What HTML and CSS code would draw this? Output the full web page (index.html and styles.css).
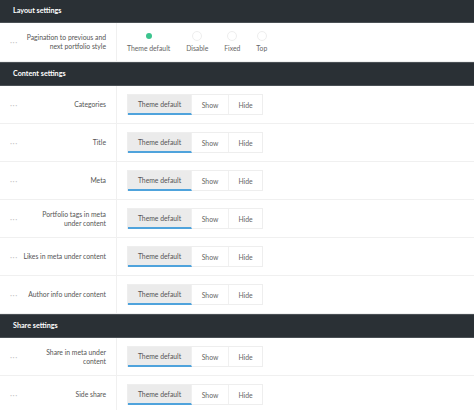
FILE: index.html
```html
<!DOCTYPE html>
<html>
<head>
<meta charset="utf-8">
<link rel="stylesheet" href="styles.css">
</head>
<body>
<div class="panel">
  <div class="section-head">Layout settings</div>
  <div class="row">
    <div class="label"><span class="dots">···</span><span class="text">Pagination to previous and<br>next portfolio style</span></div>
    <div class="value">
      <div class="radios">
        <div class="radio"><span class="circle checked"><span class="dot"></span></span><span class="rlabel">Theme default</span></div>
        <div class="radio"><span class="circle"></span><span class="rlabel">Disable</span></div>
        <div class="radio"><span class="circle"></span><span class="rlabel">Fixed</span></div>
        <div class="radio"><span class="circle"></span><span class="rlabel">Top</span></div>
      </div>
    </div>
  </div>

  <div class="section-head">Content settings</div>
  <div class="row">
    <div class="label"><span class="dots">···</span><span class="text">Categories</span></div>
    <div class="value"><div class="btns"><span class="btn active w1">Theme default</span><span class="btn w2">Show</span><span class="btn w3">Hide</span></div></div>
  </div>
  <div class="row">
    <div class="label"><span class="dots">···</span><span class="text">Title</span></div>
    <div class="value"><div class="btns"><span class="btn active w1">Theme default</span><span class="btn w2">Show</span><span class="btn w3">Hide</span></div></div>
  </div>
  <div class="row">
    <div class="label"><span class="dots">···</span><span class="text">Meta</span></div>
    <div class="value"><div class="btns"><span class="btn active w1">Theme default</span><span class="btn w2">Show</span><span class="btn w3">Hide</span></div></div>
  </div>
  <div class="row">
    <div class="label"><span class="dots">···</span><span class="text">Portfolio tags in meta<br>under content</span></div>
    <div class="value"><div class="btns"><span class="btn active w1">Theme default</span><span class="btn w2">Show</span><span class="btn w3">Hide</span></div></div>
  </div>
  <div class="row">
    <div class="label"><span class="dots">···</span><span class="text">Likes in meta under content</span></div>
    <div class="value"><div class="btns"><span class="btn active w1">Theme default</span><span class="btn w2">Show</span><span class="btn w3">Hide</span></div></div>
  </div>
  <div class="row">
    <div class="label"><span class="dots">···</span><span class="text">Author info under content</span></div>
    <div class="value"><div class="btns"><span class="btn active w1">Theme default</span><span class="btn w2">Show</span><span class="btn w3">Hide</span></div></div>
  </div>

  <div class="section-head">Share settings</div>
  <div class="row">
    <div class="label"><span class="dots">···</span><span class="text">Share in meta under<br>content</span></div>
    <div class="value"><div class="btns"><span class="btn active w1">Theme default</span><span class="btn w2">Show</span><span class="btn w3">Hide</span></div></div>
  </div>
  <div class="row">
    <div class="label"><span class="dots">···</span><span class="text">Side share</span></div>
    <div class="value"><div class="btns"><span class="btn active w1">Theme default</span><span class="btn w2">Show</span><span class="btn w3">Hide</span></div></div>
  </div>
</div>
</body>
</html>
```
FILE: styles.css
```css
html, body {
  margin: 0;
  padding: 0;
  background: #ffffff;
}
body {
  font-family: Lato, "Open Sans", sans-serif;
  font-size: 6.8px;
  color: #555;
}
.panel {
  width: 474px;
}
.section-head {
  background: #2a3035;
  color: #fff;
  font-weight: 700;
  font-size: 7.2px;
  height: 22px;
  line-height: 22px;
  padding-left: 13px;
  border-top: 1px solid #4a5055;
  border-bottom: 1px solid #4a5055;
}
.section-head:first-child {
  border-top: 0;
}
.row {
  display: flex;
  border-bottom: 1px solid #f0f0f0;
}
.label {
  width: 117px;
  box-sizing: border-box;
  flex: none;
  display: flex;
  align-items: center;
  padding: 0 10px 0 10px;
  border-right: 1px solid #f0f0f0;
}
.dots {
  color: #c4c4c4;
  letter-spacing: 0.5px;
  flex: none;
  margin-right: 4px;
  font-size: 8px;
}
.text {
  flex: 1;
  text-align: right;
  white-space: nowrap;
  line-height: 9px;
  color: #555;
}
.value {
  flex: 1;
  padding: 8px 10px;
  display: flex;
  align-items: center;
}
.btns {
  display: flex;
  border: 1px solid #eee;
  height: 19px;
}
.btn {
  display: flex;
  align-items: center;
  justify-content: center;
  color: #666;
  border-right: 1px solid #f0f0f0;
}
.btn:last-child { border-right: 0; }
.btn.active {
  background: #ebebeb;
  border-bottom: 2px solid #4fa3dc;
  margin-bottom: -1px;
  color: #555;
}
.w1 { width: 63px; }
.w2 { width: 36px; }
.w3 { width: 33px; }
.radios {
  display: flex;
  gap: 16px;
}
.radio {
  display: flex;
  flex-direction: column;
  align-items: center;
  gap: 2px;
}
.circle {
  width: 10px;
  height: 10px;
  border: 1px solid #eee;
  border-radius: 50%;
  display: flex;
  align-items: center;
  justify-content: center;
  box-sizing: border-box;
}
.circle.checked { border-color: transparent; }
.dot {
  width: 6px;
  height: 6px;
  border-radius: 50%;
  background: #3cc48e;
}
.rlabel {
  color: #666;
  line-height: 10px;
}
```
